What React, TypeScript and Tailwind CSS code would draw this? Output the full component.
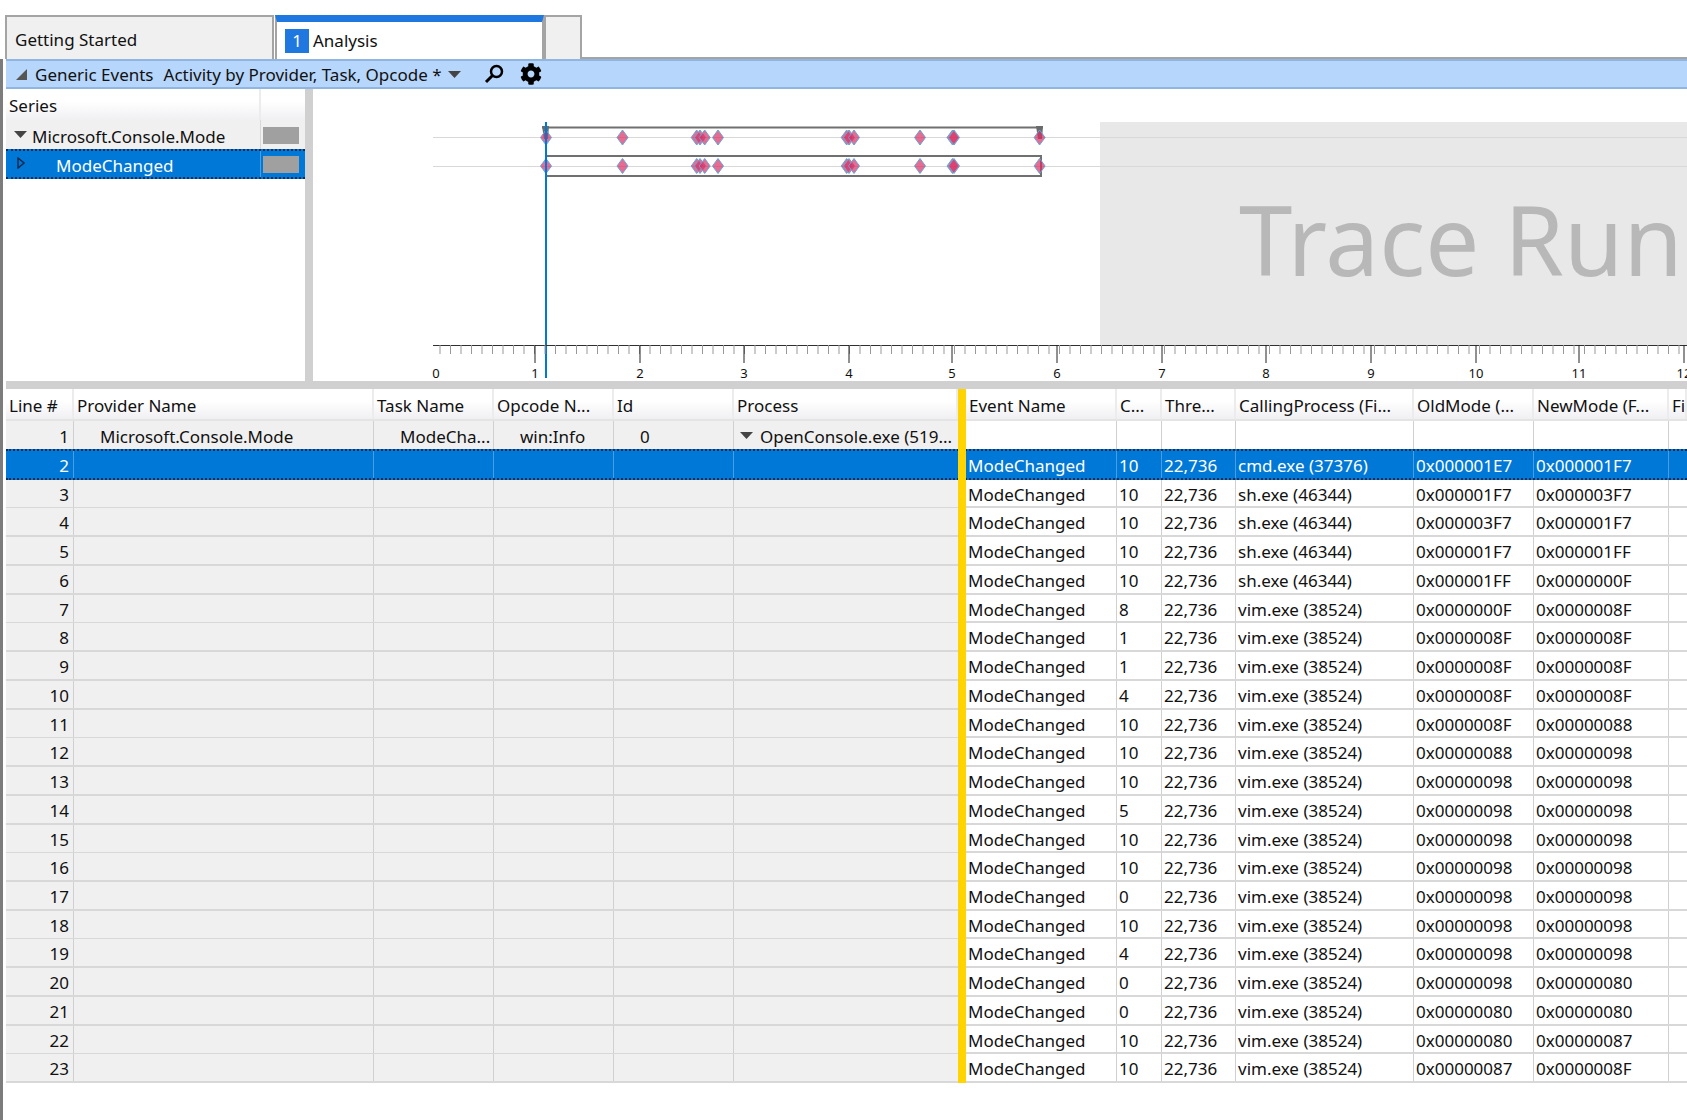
import { FaCog } from "react-icons/fa";

const COLS =
  "grid grid-cols-[68px_300px_120px_120px_120px_224px_8px_151px_45px_74px_178px_120px_135px_1fr]";

const rows: [string, string, string, string][] = [
  ["10", "cmd.exe (37376)", "0x000001E7", "0x000001F7"],
  ["10", "sh.exe (46344)", "0x000001F7", "0x000003F7"],
  ["10", "sh.exe (46344)", "0x000003F7", "0x000001F7"],
  ["10", "sh.exe (46344)", "0x000001F7", "0x000001FF"],
  ["10", "sh.exe (46344)", "0x000001FF", "0x0000000F"],
  ["8", "vim.exe (38524)", "0x0000000F", "0x0000008F"],
  ["1", "vim.exe (38524)", "0x0000008F", "0x0000008F"],
  ["1", "vim.exe (38524)", "0x0000008F", "0x0000008F"],
  ["4", "vim.exe (38524)", "0x0000008F", "0x0000008F"],
  ["10", "vim.exe (38524)", "0x0000008F", "0x00000088"],
  ["10", "vim.exe (38524)", "0x00000088", "0x00000098"],
  ["10", "vim.exe (38524)", "0x00000098", "0x00000098"],
  ["5", "vim.exe (38524)", "0x00000098", "0x00000098"],
  ["10", "vim.exe (38524)", "0x00000098", "0x00000098"],
  ["10", "vim.exe (38524)", "0x00000098", "0x00000098"],
  ["0", "vim.exe (38524)", "0x00000098", "0x00000098"],
  ["10", "vim.exe (38524)", "0x00000098", "0x00000098"],
  ["4", "vim.exe (38524)", "0x00000098", "0x00000098"],
  ["0", "vim.exe (38524)", "0x00000098", "0x00000080"],
  ["0", "vim.exe (38524)", "0x00000080", "0x00000080"],
  ["10", "vim.exe (38524)", "0x00000080", "0x00000087"],
  ["10", "vim.exe (38524)", "0x00000087", "0x0000008F"],
];

const headersLeft = ["Line #", "Provider Name", "Task Name", "Opcode N...", "Id", "Process"];
const headersRight = ["Event Name", "C...", "Thre...", "CallingProcess (Fi...", "OldMode (...", "NewMode (F...", "Fie"];

const diamonds = [546, 622.5, 696.7, 700, 704.7, 718, 846.7, 849, 854, 920, 952.5, 954, 1039.6];
const majors = [535, 640, 744, 849, 952, 1057, 1162, 1266, 1371, 1476, 1579, 1684];
const labels = ["1", "2", "3", "4", "5", "6", "7", "8", "9", "10", "11", "12"];

function Triangle({ className }: { className?: string }) {
  return (
    <svg className={className} width="13" height="7" viewBox="0 0 13 7">
      <path d="M0 0h13L6.5 7z" fill="#444" />
    </svg>
  );
}

function HeaderCell({ label }: { label: string }) {
  return (
    <div className="h-full overflow-hidden whitespace-nowrap border-r-2 border-[#ececec] bg-gradient-to-b from-white from-40% to-[#f0f0f3] pl-[3px] pt-[5px]">
      {label}
    </div>
  );
}

function Chart() {
  const minor: number[] = [];
  for (let x = 440; x < 1687; x += 10.5) minor.push(x);
  return (
    <div className="relative h-full flex-1 overflow-hidden bg-white">
      <svg className="absolute inset-0" width="1374" height="292" viewBox="313 89 1374 292">
        <rect x="1100" y="122" width="587" height="223" fill="#e8e8e8" />
        <line x1="433" x2="1687" y1="137.5" y2="137.5" stroke="#d8d8d8" />
        <line x1="433" x2="1687" y1="166.5" y2="166.5" stroke="#d8d8d8" />
        <path d="M542 127.5h501M546 156h495v20h-495" fill="none" stroke="#707070" strokeWidth="2" />
        <path d="M542 126h7l-1 13h-4zM1036 126h7l-1 13h-4z" fill="#6a6a6a" />
        {[137.5, 166].map((y) =>
          diamonds.map((x) => (
            <path
              key={`${y}-${x}`}
              d={`M${x} ${y - 7.5}l5.5 7.5-5.5 7.5-5.5-7.5z`}
              fill="#dc2f62"
              fillOpacity="0.7"
              stroke="#62a6da"
              strokeWidth="1"
            />
          )),
        )}
        <line x1="546" x2="546" y1="122" y2="378" stroke="#0078d7" strokeWidth="2" />
        <line x1="433" x2="1687" y1="345.5" y2="345.5" stroke="#303030" />
        {minor.map((x) => (
          <line key={x} x1={x} x2={x} y1="345" y2="354" stroke="#999" />
        ))}
        {majors.map((x) => (
          <line key={x} x1={x} x2={x} y1="345" y2="363" stroke="#222" />
        ))}
        <text x="436" y="378" fontSize="13" textAnchor="middle" fill="#111">0</text>
        {majors.map((x, i) => (
          <text key={x} x={x} y="378" fontSize="13" textAnchor="middle" fill="#111">
            {labels[i]}
          </text>
        ))}
      </svg>
      <div className="absolute left-[926px] top-[80px] whitespace-nowrap text-[96px] leading-[140px] text-[#b8b8b8]">
        Trace Run
      </div>
    </div>
  );
}

function SeriesPanel() {
  return (
    <div className="flex h-full w-[299px] shrink-0 flex-col bg-white">
      <div className="flex h-[31px] bg-gradient-to-b from-white from-40% to-[#f0f0f3]">
        <div className="w-[255px] border-r-2 border-[#ececec] pl-[3px] pt-[5px]">Series</div>
      </div>
      <div className="flex h-[29px] bg-[#f0f0f0]">
        <div className="flex w-[255px] items-center border-r border-[#d8d8d8] pl-[8px]">
          <Triangle className="mr-[5px]" />
          <span className="mt-[4px]">Microsoft.Console.Mode</span>
        </div>
        <div className="flex flex-1 items-center pl-[2px]">
          <div className="mt-[1px] h-[17px] w-9 bg-[#a0a0a0]" />
        </div>
      </div>
      <div className="flex h-[30px] border-y-2 border-dotted border-[#0b2c52] bg-[#0078d7] text-white">
        <div className="relative flex w-[255px] items-center border-r border-[#4a9de0] pl-[50px]">
          <svg className="absolute left-[11px] top-[6px]" width="8" height="12" viewBox="0 0 8 12">
            <path d="M1 1l6 5-6 5z" fill="none" stroke="#0b2c52" strokeWidth="1.5" />
          </svg>
          <span className="mt-[4px]">ModeChanged</span>
        </div>
        <div className="flex flex-1 items-center pl-[2px]">
          <div className="mt-[1px] h-[17px] w-9 bg-[#a0a0a0]" />
        </div>
      </div>
    </div>
  );
}

function EventTable() {
  return (
    <div className="flex flex-1 flex-col">
      <div className={`${COLS} h-[32px] border-b-2 border-[#e4e4e4]`}>
        {headersLeft.map((h) => (
          <HeaderCell key={h} label={h} />
        ))}
        <div className="relative -mb-[2px] bg-[#ffd400]" />
        {headersRight.map((h) => (
          <HeaderCell key={h} label={h} />
        ))}
      </div>
      <div className={`${COLS} h-[28px]`}>
        <div className="border-r border-[#d0d0d0] bg-[#f0f0f0] pr-1 pt-[4px] text-right">1</div>
        <div className="border-r border-[#d0d0d0] bg-[#f0f0f0] pl-[26px] pt-[4px]">Microsoft.Console.Mode</div>
        <div className="overflow-hidden whitespace-nowrap border-r border-[#d0d0d0] bg-[#f0f0f0] pl-[26px] pt-[4px]">ModeCha...</div>
        <div className="border-r border-[#d0d0d0] bg-[#f0f0f0] pl-[26px] pt-[4px]">win:Info</div>
        <div className="border-r border-[#d0d0d0] bg-[#f0f0f0] pl-[26px] pt-[4px]">0</div>
        <div className="flex items-center overflow-hidden whitespace-nowrap bg-[#f0f0f0] pl-[6px]">
          <Triangle className="mr-[7px]" />
          <span className="mt-[4px]">OpenConsole.exe (519...</span>
        </div>
        <div className="bg-[#ffd400]" />
        <div className="border-r border-[#d0d0d0]" />
        <div className="border-r border-[#d0d0d0]" />
        <div className="border-r border-[#d0d0d0]" />
        <div className="border-r border-[#d0d0d0]" />
        <div className="border-r border-[#d0d0d0]" />
        <div className="border-r border-[#d0d0d0]" />
        <div />
      </div>
      <div className="flex h-[634px] flex-col">
        {rows.map((r, i) => {
          const selected = i === 0;
          const line = selected ? "border-[#4a9de0]" : "border-[#d0d0d0]";
          const left = `border-r ${line} ${selected ? "" : "bg-[#f0f0f0]"}`;
          const right = `border-r ${line} whitespace-nowrap overflow-hidden pl-[2px] pt-[3px]`;
          return (
            <div
              key={i}
              className={`${COLS} min-h-0 flex-1 ${
                selected
                  ? "border-y-2 border-dotted border-[#0b2c52] bg-[#0078d7] text-white"
                  : "border-b-2 border-[#d8d8d8]"
              }`}
            >
              <div className={`${left} pr-1 pt-[3px] text-right`}>{i + 2}</div>
              <div className={left} />
              <div className={left} />
              <div className={left} />
              <div className={left} />
              <div className={selected ? "" : "bg-[#f0f0f0]"} />
              <div className="relative -my-[2px] bg-[#ffd400]" />
              <div className={right}>ModeChanged</div>
              <div className={right}>{r[0]}</div>
              <div className={right}>22,736</div>
              <div className={right}>{r[1]}</div>
              <div className={right}>{r[2]}</div>
              <div className={right}>{r[3]}</div>
              <div />
            </div>
          );
        })}
      </div>
    </div>
  );
}

export default function App() {
  return (
    <div className="h-[1120px] w-[1687px] overflow-hidden bg-white font-['Noto_Sans',sans-serif] text-[17px] leading-[24px] text-[#111]">
      <div className="flex h-[59px] items-end pl-[5px] pt-[15px]">
        <div className="h-full w-[269px] border-2 border-b-0 border-[#a4a4a4] bg-[#f0f0f0] pl-[8px] pt-[11px]">
          Getting Started
        </div>
        <div className="ml-[1px] flex h-full w-[269px] items-center border-x-2 border-[#a4a4a4] border-t-[7px] border-t-[#1f78e0] bg-white pl-[8px]">
          <span className="mr-[4px] flex h-[24px] w-[24px] items-center justify-center bg-[#1f78e0] text-white">1</span>
          <span>Analysis</span>
        </div>
        <div className="h-full w-[38px] border-2 border-b-0 border-[#a4a4a4] bg-[#f0f0f0]" />
        <div className="h-[2px] flex-1 bg-[#a4a4a4]" />
      </div>
      <div className="flex h-[1061px] border-l-[3px] border-[#7c7c7c]">
        <div className="flex min-w-0 flex-1 flex-col pl-[3px]">
          <div className="flex h-[30px] items-center border-y-2 border-[#8fb5e0] bg-[#b7d6fb]">
            <svg className="ml-[10px]" width="11" height="11" viewBox="0 0 11 11">
              <path d="M11 0v11H0z" fill="#555" />
            </svg>
            <span className="ml-[8px] mt-[2px]">Generic Events</span>
            <span className="ml-[10px] mt-[2px]">Activity by Provider, Task, Opcode *</span>
            <Triangle className="ml-[6px]" />
            <svg className="ml-[23px]" width="20" height="20" viewBox="0 0 20 20">
              <circle cx="12.5" cy="7.5" r="5.5" fill="none" stroke="#000" strokeWidth="2.5" />
              <path d="M8.5 11.5L2 18" stroke="#000" strokeWidth="3" />
            </svg>
            <FaCog className="ml-[16px]" size={22} color="#000" />
          </div>
          <div className="flex h-[292px]">
            <SeriesPanel />
            <div className="h-full w-[8px] shrink-0 bg-[#d0d0d0]" />
            <Chart />
          </div>
          <div className="h-[8px] shrink-0 bg-[#d0d0d0]" />
          <EventTable />
        </div>
      </div>
    </div>
  );
}
